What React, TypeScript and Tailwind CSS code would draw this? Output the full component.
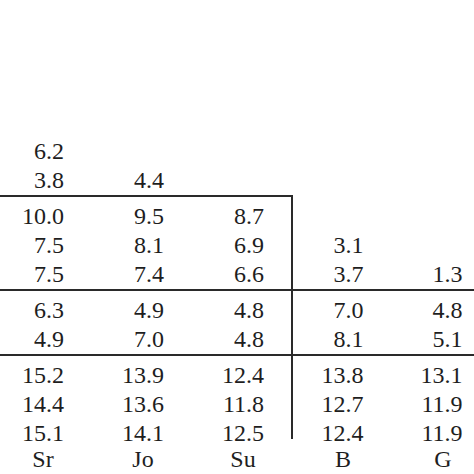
type Row = string[];

const topRows: Row[] = [
  ["6.2", "", "", "", ""],
  ["3.8", "4.4", "", "", ""],
];

const blocks: Row[][] = [
  [
    ["10.0", "9.5", "8.7", "", ""],
    ["7.5", "8.1", "6.9", "3.1", ""],
    ["7.5", "7.4", "6.6", "3.7", "1.3"],
  ],
  [
    ["6.3", "4.9", "4.8", "7.0", "4.8"],
    ["4.9", "7.0", "4.8", "8.1", "5.1"],
  ],
  [
    ["15.2", "13.9", "12.4", "13.8", "13.1"],
    ["14.4", "13.6", "11.8", "12.7", "11.9"],
    ["15.1", "14.1", "12.5", "12.4", "11.9"],
  ],
];

const headers = ["Sr", "Jo", "Su", "B", "G"];

function Cell({ value }: { value: string }) {
  return (
    <div className="flex w-[100px] justify-center">
      <span className="inline-block w-[42px] text-right whitespace-nowrap">{value}</span>
    </div>
  );
}

function Rows({ rows, from, to, last }: { rows: Row[]; from: number; to: number; last?: boolean }) {
  return (
    <>
      {rows.map((r, i) => (
        <div
          key={i}
          className={`flex ${last && i === rows.length - 1 ? "h-[20px]" : "h-[29px]"}`}
        >
          {r.slice(from, to).map((v, j) => (
            <Cell key={j} value={v} />
          ))}
        </div>
      ))}
    </>
  );
}

export default function App() {
  return (
    <div className="h-[474px] w-[474px] overflow-hidden bg-white font-['Liberation_Serif','Times_New_Roman',serif] text-[#1e1e1e]">
      <div className="ml-[-7px] w-[500px] pt-[137px] text-[24px] leading-[29px]">
        {/* rows above the first rule */}
        <Rows rows={topRows} from={0} to={5} />

        {/* first block: rule only over first three columns */}
        <div className="flex items-start">
          <div className="w-[300px] border-t-2 border-[#2a2a2a] pt-[5px]">
            <Rows rows={blocks[0]} from={0} to={3} />
          </div>
          <div className="ml-[-2px] w-[200px] border-l-2 border-[#2a2a2a] pt-[7px]">
            <Rows rows={blocks[0]} from={3} to={5} />
          </div>
        </div>

        {/* second block */}
        <div className="flex items-start border-t-2 border-[#2a2a2a]">
          <div className="w-[300px] pt-[5px]">
            <Rows rows={blocks[1]} from={0} to={3} />
          </div>
          <div className="ml-[-2px] w-[200px] border-l-2 border-[#2a2a2a] pt-[5px]">
            <Rows rows={blocks[1]} from={3} to={5} />
          </div>
        </div>

        {/* third block */}
        <div className="flex items-start border-t-2 border-[#2a2a2a]">
          <div className="w-[300px] pt-[5px]">
            <Rows rows={blocks[2]} from={0} to={3} />
          </div>
          <div className="ml-[-2px] w-[200px] border-l-2 border-[#2a2a2a] pt-[5px]">
            <Rows rows={blocks[2]} from={3} to={5} last />
          </div>
        </div>

        <div className="mt-[-3px] flex h-[29px]">
          {headers.map((h) => (
            <div key={h} className="w-[100px] text-center">
              {h}
            </div>
          ))}
        </div>
      </div>
    </div>
  );
}
